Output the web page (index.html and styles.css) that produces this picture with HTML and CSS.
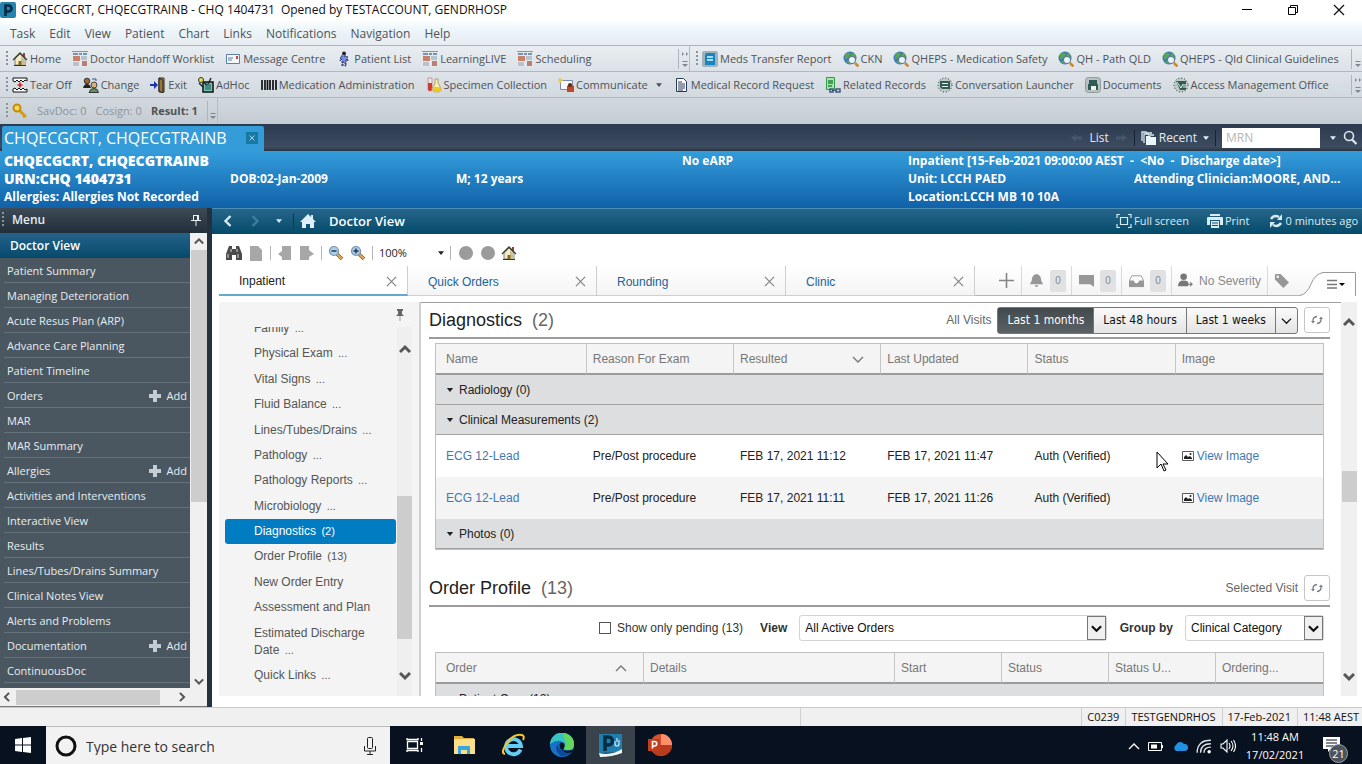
FILE: index.html
```html
<!DOCTYPE html>
<html lang="en">
<head>
<meta charset="utf-8">
<title>CHQECGCRT, CHQECGTRAINB - CHQ 1404731</title>
<link rel="stylesheet" href="styles.css">
</head>
<body>
<svg class="defs" aria-hidden="true">
  <symbol id="house" viewBox="0 0 16 16"><path d="M11 2h2v4h-2z" fill="#9c3b2e"/><path d="M3 8l5-5 5 5v6H3z" fill="#f3ebc6" stroke="#666" stroke-width=".8"/><path d="M9 5l4 4v5H9z" fill="#c9c19c"/><path d="M1 9l7-7 7 7" fill="none" stroke="#3d3d30" stroke-width="1.300"/><path d="M6.500 10h3v4h-3z" fill="#8b6a20"/><path d="M2 14.500h12" stroke="#333"/></symbol>
  <symbol id="sheet" viewBox="0 0 16 16"><path d="M0 0h16v16H0z" fill="#e2eaf0"/><path d="M0 .5h16" stroke="#6f9cc4"/><path d="M1 3h5M7 3h3M11 3h4" stroke="#51779b" stroke-width="1.400"/><path d="M1 5h7v5H1z" fill="#c97f68"/><path d="M9 6h6M9 8h6M1 12h6M1 14h6" stroke="#8d99a3"/><path d="M10 10h5v5h-5z" fill="#bd7d70"/></symbol>
  <symbol id="globe" viewBox="0 0 16 16"><circle cx="7" cy="7" r="6.500" fill="#3b78bd"/><path d="M2 3q4-3 6 0l-2 3-4 3zM10 1l3 4-3 3-2-3zM3 11l3-3 2 4-2 1z" fill="#5aa552"/><circle cx="9" cy="9" r="3.600" fill="#e8f4f7" stroke="#5d7486"/><path d="M12 12l3.500 3.500" stroke="#c98a2c" stroke-width="2.600"/></symbol>
  <symbol id="x" viewBox="0 0 12 12"><path d="M1 1l10 10M11 1L1 11" fill="none" stroke="currentColor" stroke-width="1.300"/></symbol>
  <symbol id="down" viewBox="0 0 12 12"><path d="M1 4l5 5 5-5" fill="none" stroke="currentColor" stroke-width="var(--w,2.4)"/></symbol>
  <symbol id="up" viewBox="0 0 12 12"><path d="M1 9l5-5 5 5" fill="none" stroke="currentColor" stroke-width="var(--w,2.4)"/></symbol>
  <symbol id="left" viewBox="0 0 12 12"><path d="M8.500 1l-5 5 5 5" fill="none" stroke="currentColor" stroke-width="var(--w,2.4)"/></symbol>
  <symbol id="right" viewBox="0 0 12 12"><path d="M3.500 1l5 5-5 5" fill="none" stroke="currentColor" stroke-width="var(--w,2.4)"/></symbol>
  <symbol id="caret" viewBox="0 0 8 5"><path d="M0 0h8L4 5z" fill="currentColor"/></symbol>
  <symbol id="plus" viewBox="0 0 12 12"><path d="M4 0h4v4h4v4H8v4H4V8H0V4h4z" fill="#c3cbd3"/></symbol>
  <symbol id="more" viewBox="0 0 8 18"><path d="M1 2l2 2-2 2zM5 2l2 2-2 2z" fill="#7d8990"/><path d="M1.500 11.500h5" stroke="#7d8990"/><path d="M1 14h6l-3 3z" fill="#7d8990"/></symbol>
  <symbol id="more2" viewBox="0 0 8 18"><path d="M1.500 11.500h5" stroke="#7d8990"/><path d="M1 14h6l-3 3z" fill="#7d8990"/></symbol>
  <symbol id="sync" viewBox="0 0 12 12"><path d="M2 7.500Q1.500 3 6 2.500M10 4.500Q10.500 9 6 9.500" fill="none" stroke="#7b7f82" stroke-width="1.300"/><path d="M0 7h4L2 9.500zM8 5h4L10 2.500z" fill="#7b7f82"/></symbol>
  <symbol id="photo" viewBox="0 0 12 10"><path d="M.5 .5h11v9H.5z" fill="#fff" stroke="#5c5c5c"/><path d="M2 8V6l2-2 2 2 2-1 2 2v1z" fill="#222"/><circle cx="8.500" cy="3" r="1" fill="#222"/></symbol>
  <symbol id="lens" viewBox="0 0 16 16"><path d="M9 9l5 5" stroke="#8a6130" stroke-width="3.600"/><path d="M9 9l5 5" stroke="#e0a95c" stroke-width="2"/><circle cx="6" cy="6" r="4.500" fill="#a9cdeb" stroke="#7793ac" stroke-width="1.200"/></symbol>
</svg>

<header class="titlebar">
  <svg class="app" viewBox="0 0 16 16"><rect width="16" height="16" rx="2" fill="#2583b0"/><path d="M5.500 14V3.500h3a3 3 0 010 6H6" fill="none" stroke="#062c45" stroke-width="2.600"/></svg>
  <span>CHQECGCRT, CHQECGTRAINB - CHQ 1404731</span><span class="opened">Opened by TESTACCOUNT, GENDRHOSP</span>
  <div class="winbtns">
    <button aria-label="Minimise"><svg viewBox="0 0 12 12"><path d="M1 5.500h10" stroke="#000"/></svg></button>
    <button aria-label="Restore"><svg viewBox="0 0 12 12"><path d="M1.500 3.500h7v7h-7zM3.500 3V1.500h7v7H9" fill="none" stroke="#000"/></svg></button>
    <button aria-label="Close"><svg><use href="#x"/></svg></button>
  </div>
</header>

<nav class="menubar">
  <button>Task</button><button>Edit</button><button>View</button><button>Patient</button><button>Chart</button><button>Links</button><button>Notifications</button><button>Navigation</button><button>Help</button>
</nav>

<div class="toolbar">
  <div class="tools half">
    <i class="grip"></i>
    <button><svg><use href="#house"/></svg>Home</button>
    <button><svg><use href="#sheet"/></svg>Doctor Handoff Worklist</button>
    <button><svg viewBox="0 0 16 16"><path d="M1.500 3.500h13v9h-13z" fill="#f6f9ff" stroke="#5b7fae"/><path d="M3 7h5M3 9h4" stroke="#5b7fae"/><path d="M11 5h2v3h-2z" fill="#c44d35"/></svg>Message Centre</button>
    <button><svg viewBox="0 0 16 16"><circle cx="8" cy="2.500" r="2" fill="#222"/><path d="M5 5h6l1 5-2-2v7H9v-4H7v4H6V8l-2 2z" fill="#7c93e3" stroke="#242e6b" stroke-dasharray="2 1"/></svg>Patient List</button>
    <button><svg><use href="#sheet"/></svg>LearningLIVE</button>
    <button><svg><use href="#sheet"/></svg>Scheduling</button>
    <i class="end"></i><svg class="more"><use href="#more"/></svg>
  </div>
  <div class="tools">
    <i class="grip"></i>
    <button><svg viewBox="0 0 16 16"><rect width="16" height="16" rx="2" fill="#9fb2bd"/><path d="M4 2h9v12H3V4z" fill="#1784c0"/><path d="M5 6h6M5 9h6" stroke="#e2f4ff" stroke-width="1.500"/></svg>Meds Transfer Report</button>
    <button><svg><use href="#globe"/></svg>CKN</button>
    <button><svg><use href="#globe"/></svg>QHEPS - Medication Safety</button>
    <button><svg><use href="#globe"/></svg>QH - Path QLD</button>
    <button><svg><use href="#globe"/></svg>QHEPS - Qld Clinical Guidelines</button>
    <i class="end"></i><svg class="more"><use href="#more2"/></svg>
  </div>
</div>

<div class="toolbar">
  <div class="tools">
    <i class="grip"></i>
    <button><svg viewBox="0 0 16 16"><path d="M1 1h14v3l-2-1-2 2-2-2-2 2-2-2-2 2-2-1zM1 15h14v-3l-2 1-2-2-2 2-2-2-2 2-2-2-2 1z" fill="#fff" stroke="#111"/><path d="M8 5.500v5M5.500 8h5" stroke="#d42020" stroke-width="1.600"/></svg>Tear Off</button>
    <button><svg viewBox="0 0 16 16"><circle cx="4" cy="4" r="2.800" fill="#a06935" stroke="#333"/><path d="M0 11q1-4 4-4t4 4z" fill="#222"/><circle cx="11" cy="8" r="3" fill="#dbb17c" stroke="#444"/><path d="M6 15.500q1-4 5-4t4.500 4z" fill="#5e9858" stroke="#333"/><path d="M9 2h4v2" fill="none" stroke="#2b50a8"/></svg>Change</button>
    <button><svg viewBox="0 0 16 16"><path d="M9 1h5v14H9z" fill="#e1c96e" stroke="#222"/><path d="M9 1l4 2v13l-4-2z" fill="#987734" stroke="#222"/><path d="M0 8h5" stroke="#1c32b4" stroke-width="2"/><path d="M4 4l4 4-4 4z" fill="#1c32b4"/></svg>Exit</button>
    <button><svg viewBox="0 0 16 16"><path d="M5 5h10v10H5z" fill="#76c7ba" stroke="#111" stroke-width="1.500"/><path d="M7 8h6M7 10h6M7 12h6" stroke="#164b4b"/><circle cx="3" cy="3" r="2.500" fill="#e6e051" stroke="#333"/><path d="M5 5l4 3M13 1l-3 6M1 6l4 4" stroke="#222" stroke-width="1.400"/></svg>AdHoc</button>
    <button><svg viewBox="0 0 16 16"><path d="M1 3v10M4 3v10M6.500 3v10M9 3v10M12 3v10M15 3v10" stroke="#111" stroke-width="1.700"/></svg>Medication Administration</button>
    <button><svg viewBox="0 0 16 16"><path d="M2 1h4v11a2 2 0 01-4 0z" fill="#f6e5e5" stroke="#b99"/><path d="M2 6h4v6a2 2 0 01-4 0z" fill="#d13a2d"/><path d="M9 2h3v4l3 5q1 4-4 4t-5-4l3-4z" fill="#f7efb8" stroke="#b9a05a"/><path d="M7 10h8q1 5-4 5t-4-5z" fill="#efc92a"/></svg>Specimen Collection</button>
    <button><svg viewBox="0 0 16 16"><path d="M2.500 3.500h12v9h-12z" fill="#f7f9fc" stroke="#7a8cab"/><path d="M0 3h5M2 1v5" stroke="#e7cb4d" stroke-width="1.500"/><path d="M9 15V9l3-2 4 2v6z" fill="#bd4a24"/><circle cx="12" cy="8" r="2" fill="#5a2b16"/></svg>Communicate<svg class="dd"><use href="#caret"/></svg></button>
    <button><svg viewBox="0 0 16 16"><path d="M3.500 1.500h7l3 3v10h-10z" fill="#fff" stroke="#263b5c"/><path d="M5 5h4M5 7h7M5 9h7M5 11h7M5 13h5" stroke="#263b5c"/></svg>Medical Record Request</button>
    <button><svg viewBox="0 0 16 16"><path d="M1.500 .5h8v12h-8z" fill="#a8e5ae" stroke="#2d9c47"/><path d="M3 4h5M3 6h5M3 9h4" stroke="#278442" stroke-width="1.300"/><path d="M5 12h3v3H5zM11 12h4v3h-4z" fill="none" stroke="#445780" stroke-width="1.500"/><path d="M7 13.500h5" stroke="#445780"/></svg>Related Records</button>
    <button><svg viewBox="0 0 16 16"><circle cx="8" cy="8" r="7" fill="#bfcbc8" stroke="#222" stroke-dasharray="1 2"/><path d="M3 4h10v8H5l-2-2z" fill="#315c54"/><path d="M5 6.500h6M5 9.500h6" stroke="#e8f2ed"/></svg>Conversation Launcher</button>
    <button><svg viewBox="0 0 16 16"><rect x=".5" y=".5" width="15" height="15" rx="3" fill="#b8c1c1" stroke="#929b9c"/><path d="M4 3h8v4h1v6H3V7h1z" fill="#315c54"/><path d="M6 9h5v4H6z" fill="#e9f4ef"/></svg>Documents</button>
    <button><svg viewBox="0 0 16 16"><circle cx="8" cy="8" r="7" fill="#bfcbc8" stroke="#222" stroke-dasharray="1 2"/><path d="M3 4h10v9H7z" fill="#315c54"/><path d="M4 5l4 6 2-4M10 8h4M10 10h3" fill="none" stroke="#e8f2ed"/></svg>Access Management Office</button>
    <i class="end"></i><svg class="more"><use href="#more"/></svg>
  </div>
</div>

<div class="toolbar last">
  <div class="tools short">
    <i class="grip"></i>
    <svg class="key" viewBox="0 0 16 16"><path d="M7 7l6 6M11 14l3-2" stroke="#d69b16" stroke-width="3"/><circle cx="5" cy="5" r="3.500" fill="#f7d94d" stroke="#c48a13" stroke-width="2"/></svg>
    <span class="dim">SavDoc: 0</span><span class="dim">Cosign: 0</span><b>Result: 1</b>
    <i class="end"></i><svg class="more"><use href="#more2"/></svg>
  </div>
</div>

<div class="patienttabs">
  <div class="ptab"><span>CHQECGCRT, CHQECGTRAINB</span><button aria-label="Close chart"><svg><use href="#x"/></svg></button></div>
  <div class="finder">
    <svg class="arrow" viewBox="0 0 14 10"><path d="M6 0v3h8v4H6v3L0 5z" fill="#48566a"/></svg><button>List</button><svg class="arrow" viewBox="0 0 14 10"><path d="M8 0v3H0v4h8v3l6-5z" fill="#48566a"/></svg>
    <button class="recent"><svg viewBox="0 0 16 14"><path d="M1 10V1h4l1 1h5M3 12V3h4l1 1h5" fill="none" stroke="#dce8f0" stroke-width="1.300"/><path d="M5 5h4l1 1h5v8H5z" fill="#eaf4fa"/></svg>Recent<svg class="dd"><use href="#caret"/></svg></button>
    <input aria-label="MRN" placeholder="MRN">
    <svg class="dd"><use href="#caret"/></svg>
    <button aria-label="Search"><svg viewBox="0 0 16 16"><circle cx="7" cy="6" r="4.500" fill="none" stroke="#dce8f0" stroke-width="1.600"/><path d="M10 9.500l4.500 4.500" stroke="#dce8f0" stroke-width="2.200"/></svg></button>
  </div>
</div>

<section class="banner">
  <strong class="big">CHQECGCRT, CHQECGTRAINB</strong><span class="c4">No eARP</span><span class="c5 wide">Inpatient [15-Feb-2021 09:00:00 AEST&nbsp; -&nbsp; &lt;No&nbsp; -&nbsp; Discharge date&gt;]</span>
  <strong class="big">URN:CHQ 1404731</strong><span>DOB:02-Jan-2009</span><span>M; 12 years</span><span class="c5">Unit: LCCH PAED</span><span>Attending Clinician:MOORE, AND...</span>
  <span>Allergies: Allergies Not Recorded</span><span class="c5">Location:LCCH MB 10 10A</span>
</section>

<main class="work">
  <aside class="menu">
    <div class="menuhead"><i class="grip"></i><span>Menu</span><svg viewBox="0 0 10 12"><path d="M2.500 1v5M7.500 1v5M2 1.500h5M0 6.500h10M5 7v5M6.500 1v5" stroke="#e9eff2" fill="none"/></svg></div>
    <div class="menubody">
      <ul>
        <li class="on"><a href="#">Doctor View</a></li>
        <li><a href="#">Patient Summary</a></li>
        <li><a href="#">Managing Deterioration</a></li>
        <li><a href="#">Acute Resus Plan (ARP)</a></li>
        <li><a href="#">Advance Care Planning</a></li>
        <li><a href="#">Patient Timeline</a></li>
        <li><a href="#">Orders</a><button><svg><use href="#plus"/></svg>Add</button></li>
        <li><a href="#">MAR</a></li>
        <li><a href="#">MAR Summary</a></li>
        <li><a href="#">Allergies</a><button><svg><use href="#plus"/></svg>Add</button></li>
        <li><a href="#">Activities and Interventions</a></li>
        <li><a href="#">Interactive View</a></li>
        <li><a href="#">Results</a></li>
        <li><a href="#">Lines/Tubes/Drains Summary</a></li>
        <li><a href="#">Clinical Notes View</a></li>
        <li><a href="#">Alerts and Problems</a></li>
        <li><a href="#">Documentation</a><button><svg><use href="#plus"/></svg>Add</button></li>
        <li><a href="#">ContinuousDoc</a></li>
        <li></li>
      </ul>
      <div class="vscroll"><svg><use href="#up"/></svg><i class="thumb"></i><svg><use href="#down"/></svg></div>
    </div>
    <div class="hscroll"><svg><use href="#left"/></svg><i class="thumb"></i><svg><use href="#right"/></svg></div>
  </aside>

  <section class="view">
    <div class="navbar">
      <button aria-label="Back"><svg class="s12"><use href="#left"/></svg></button>
      <button class="faint" aria-label="Forward"><svg class="s12"><use href="#right"/></svg></button>
      <svg class="dd"><use href="#caret"/></svg>
      <button class="home" aria-label="Home"><svg viewBox="0 0 16 16"><path d="M0 9l8-8 3 3V2h2v4l3 3h-2v6h-4v-4H6v4H2V9z" fill="#dff0f8"/></svg></button>
      <h1>Doctor View</h1>
      <div class="navright">
        <button><svg viewBox="0 0 16 16"><path d="M1 5V1.500h3M12 1.500h3V5M15 11v3.500h-3M4 14.500H1V11M4.500 4.500h7v7h-7z" fill="none" stroke="#d9ebf3" stroke-width="1.200"/></svg>Full screen</button>
        <button><svg viewBox="0 0 16 16"><path d="M3 1h10v2H3zM1 4h14q1 0 1 1v7h-3V7H3v5H0V5q0-1 1-1zM4 8h8v7H4z" fill="#d9ebf3"/><path d="M5 10h6M5 12.500h6" stroke="#0e5576"/></svg>Print</button>
        <button><svg viewBox="0 0 16 16"><path d="M3 6Q6 1.500 11 4M13 10q-3 4.500-8 2" fill="none" stroke="#d9ebf3" stroke-width="2.400"/><path d="M9 7l5 0 0-6zM7 9H2v6z" fill="#d9ebf3"/></svg>0 minutes ago</button>
      </div>
    </div>

    <div class="iconbar">
      <svg viewBox="0 0 16 14"><path d="M3 0h3v3h4V0h3l3 8v6h-6V9H6v5H0V8z" fill="#4a4a4a"/><path d="M2 8v4M5 3v3M11 3v3M12 8v4" stroke="#d8d8d8"/></svg>
      <svg viewBox="0 0 16 16"><path d="M2 1h8l4 4v11H2z" fill="#a7a7a7"/></svg><i></i>
      <svg viewBox="0 0 16 16"><path d="M5 1h9v14H5v-3L1 9l4-3z" fill="#a7a7a7"/></svg>
      <svg viewBox="0 0 16 16"><path d="M1 1h9v4l5 4-5 3v3H1z" fill="#a7a7a7"/></svg><i></i>
      <svg viewBox="0 0 16 16"><use href="#lens"/><path d="M3.500 6h5" stroke="#234" stroke-width="1.400"/></svg>
      <svg viewBox="0 0 16 16"><use href="#lens"/><path d="M3.500 6h5M6 3.500v5" stroke="#234" stroke-width="1.400"/></svg><i></i>
      <span class="zoom">100%<svg class="dd"><use href="#caret"/></svg></span><i></i>
      <b></b><b></b>
      <svg><use href="#house"/></svg>
    </div>

    <div class="tabs">
      <div class="tab on"><a href="#">Inpatient</a><button aria-label="Close Inpatient"><svg><use href="#x"/></svg></button></div>
      <div class="tab"><a href="#">Quick Orders</a><button aria-label="Close Quick Orders"><svg><use href="#x"/></svg></button></div>
      <div class="tab"><a href="#">Rounding</a><button aria-label="Close Rounding"><svg><use href="#x"/></svg></button></div>
      <div class="tab"><a href="#">Clinic</a><button aria-label="Close Clinic"><svg><use href="#x"/></svg></button></div>
      <div class="acts">
        <button class="add" aria-label="Add tab"><svg viewBox="0 0 16 16"><path d="M8 0v16M0 8h16" stroke="#858585" stroke-width="1.700"/></svg></button>
        <button><svg viewBox="0 0 16 16"><path d="M8 1q5 1 5 7l2 4H1l2-4q0-6 5-7zM6 13h4q-2 4-4 0z" fill="#979797"/></svg><em>0</em></button>
        <button><svg viewBox="0 0 16 16"><path d="M0 2h16v13l-4-3H0z" fill="#979797"/></svg><em>0</em></button>
        <button><svg viewBox="0 0 16 16"><path d="M3 3h10l2.500 5v6.500H.5V8z" fill="#fff" stroke="#979797"/><path d="M0 8h5q1 3 3 3t3-3h5v7H0z" fill="#979797"/></svg><em>0</em></button>
        <button class="sev"><svg viewBox="0 0 16 16"><circle cx="6" cy="4" r="3.500" fill="#777"/><path d="M0 14q0-6 6-6t5 4v2z" fill="#777"/><path d="M10 12h5M13 10l2 2-2 2" fill="none" stroke="#777" stroke-width="1.200"/></svg>No Severity</button>
        <button class="tag" aria-label="Tag"><svg viewBox="0 0 16 16"><path d="M1 2q0-1 1-1h5l9 9-6 6-9-9z" fill="#979797"/><circle cx="4" cy="4" r="1.300" fill="#fff"/></svg></button>
        <button class="opts" aria-label="Options"><svg class="curve" viewBox="0 0 60 30" preserveAspectRatio="none"><path d="M0 29.500Q7 28 11 18T23 6.500h32.500V30H0z" fill="#fff"/><path d="M0 29.500Q7 28 11 18T23 6.500h32.500V30" fill="none" stroke="#999"/></svg><svg class="lines" viewBox="0 0 18 10"><path d="M0 1.500h10M0 5.500h10M0 9h10" stroke="#777" stroke-width="1.300"/><path d="M12 4h6l-3 3z" fill="#000"/></svg></button>
      </div>
    </div>

    <div class="page">
      <nav class="side">
        <svg class="pin" viewBox="0 0 8 14"><path d="M1 1h6v2H6v3l2 2H0l2-2V3H1z" fill="#666"/><path d="M4 8v5" stroke="#999"/></svg>
        <div class="clip">
          <ul>
            <li><a href="#">Family <small>...</small></a></li>
            <li><a href="#">Physical Exam <small>...</small></a></li>
            <li><a href="#">Vital Signs <small>...</small></a></li>
            <li><a href="#">Fluid Balance <small>...</small></a></li>
            <li><a href="#">Lines/Tubes/Drains <small>...</small></a></li>
            <li><a href="#">Pathology <small>...</small></a></li>
            <li><a href="#">Pathology Reports <small>...</small></a></li>
            <li><a href="#">Microbiology <small>...</small></a></li>
            <li class="on"><a href="#">Diagnostics <small>(2)</small></a></li>
            <li><a href="#">Order Profile <small>(13)</small></a></li>
            <li><a href="#">New Order Entry</a></li>
            <li><a href="#">Assessment and Plan</a></li>
            <li><a href="#">Estimated Discharge Date <small>...</small></a></li>
            <li><a href="#">Quick Links <small>...</small></a></li>
          </ul>
          <div class="sidescroll"><svg><use href="#up"/></svg><i class="thumb"></i><svg><use href="#down"/></svg></div>
        </div>
      </nav>

      <div class="content">
        <section class="block">
          <div class="head">
            <h2>Diagnostics <span>(2)</span></h2>
            <span class="scope">All Visits</span>
            <div class="range"><button class="on">Last 1 months</button><button>Last 48 hours</button><button>Last 1 weeks</button><button class="arr" aria-label="More ranges"><svg><use href="#down"/></svg></button></div>
            <button class="refresh" aria-label="Refresh"><svg><use href="#sync"/></svg></button>
          </div>
          <table>
            <colgroup><col class="w17"><col><col><col><col><col></colgroup>
            <thead><tr><th>Name</th><th>Reason For Exam</th><th>Resulted<svg><use href="#down"/></svg></th><th>Last Updated</th><th>Status</th><th>Image</th></tr></thead>
            <tbody>
              <tr class="group"><td colspan="6"><svg><use href="#caret"/></svg>Radiology (0)</td></tr>
              <tr class="group"><td colspan="6"><svg><use href="#caret"/></svg>Clinical Measurements (2)</td></tr>
              <tr><td><a href="#">ECG 12-Lead</a></td><td>Pre/Post procedure</td><td>FEB 17, 2021 11:12</td><td>FEB 17, 2021 11:47</td><td>Auth (Verified)</td><td><a href="#"><svg><use href="#photo"/></svg>View Image</a></td></tr>
              <tr class="alt"><td><a href="#">ECG 12-Lead</a></td><td>Pre/Post procedure</td><td>FEB 17, 2021 11:11</td><td>FEB 17, 2021 11:26</td><td>Auth (Verified)</td><td><a href="#"><svg><use href="#photo"/></svg>View Image</a></td></tr>
              <tr class="group"><td colspan="6"><svg><use href="#caret"/></svg>Photos (0)</td></tr>
            </tbody>
          </table>
        </section>

        <section class="block orders">
          <div class="head">
            <h2>Order Profile <span>(13)</span></h2>
            <span class="scope">Selected Visit</span>
            <button class="refresh" aria-label="Refresh orders"><svg><use href="#sync"/></svg></button>
          </div>
          <div class="filters">
            <label class="check"><input type="checkbox">Show only pending (13)</label>
            <label for="view">View</label>
            <span class="pick wide"><select id="view"><option>All Active Orders</option></select><svg><use href="#down"/></svg></span>
            <label for="by">Group by</label>
            <span class="pick"><select id="by"><option>Clinical Category</option></select><svg><use href="#down"/></svg></span>
          </div>
          <table>
            <colgroup><col class="order"><col><col class="n"><col class="n"><col class="n"><col class="n"></colgroup>
            <thead><tr><th>Order<svg><use href="#up"/></svg></th><th>Details</th><th>Start</th><th>Status</th><th>Status U...</th><th>Ordering...</th></tr></thead>
            <tbody><tr class="group"><td colspan="6"><svg><use href="#caret"/></svg>Patient Care (12)</td></tr></tbody>
          </table>
        </section>
        <svg class="pointer" viewBox="0 0 13 21"><path d="M1 1v16l4-4 3 7 2-1-3-6h5z" fill="#fff" stroke="#000"/></svg>
      </div>
      <div class="mainscroll"><svg><use href="#up"/></svg><i class="thumb"></i><svg><use href="#down"/></svg></div>
    </div>
  </section>
</main>

<footer class="status"><i class="msg"></i><i></i><span>C0239</span><span>TESTGENDRHOS</span><span>17-Feb-2021</span><span>11:48 AEST</span></footer>

<div class="taskbar">
  <button class="start" aria-label="Start"><svg viewBox="0 0 16 16"><path d="M0 2l7-1v6.500H0zM8 1l8-1v7.500H8zM0 8.500h7V15l-7-1zM8 8.500h8V16l-8-1z" fill="#fff"/></svg></button>
  <div class="search"><svg viewBox="0 0 22 22"><circle cx="11" cy="11" r="9" fill="none" stroke="#111" stroke-width="3"/></svg><input aria-label="Search" placeholder="Type here to search"><svg class="mic" viewBox="0 0 12 18"><rect x="3.500" y=".5" width="5" height="11" rx="1" fill="none" stroke="#222"/><path d="M.5 9v5h11V9M6 14v3M3 17.500h6" fill="none" stroke="#222"/></svg></div>
  <button aria-label="Task view"><svg class="tv" viewBox="0 0 18 16"><path d="M1.500 4.500h10v7h-10zM1 1v1.500h11V1M1 15v-1.500h11V15M15.500 1v3M15.500 11v4" fill="none" stroke="#fff" stroke-width="1.300"/><path d="M14 5h3v3h-3z" fill="#fff"/></svg></button>
  <button aria-label="File Explorer"><svg viewBox="0 0 24 24"><path d="M2 3h8l2 2h10v4H2z" fill="#e4ae3c"/><path d="M2 6h21v15H2z" fill="#fbe08c"/><path d="M6 21v-7q0-1 1-1h10q1 0 1 1v7h-3v-4H9v4z" fill="#3aa5dc"/></svg></button>
  <button aria-label="Internet Explorer"><svg viewBox="0 0 24 24"><path d="M19.500 16.500a7.500 7.500 0 11.500-3.500H7" fill="none" stroke="#63cdf5" stroke-width="3.800"/><path d="M4 21Q-1 20 6 10T21 2q3 1 1 5" fill="none" stroke="#f2c535" stroke-width="2"/></svg></button>
  <button aria-label="Edge"><svg viewBox="0 0 24 24"><circle cx="12" cy="12" r="12" fill="#1673c8"/><path d="M0 11A12 12 0 0124 12q0 5-6 5-4 0-4-2 2-2 0-5-6-5-14 1z" fill="#35c4c3"/><path d="M13 0q11 2 11 11 0 6-6 6-4 0-4-2 4-4 1-8z" fill="#63d65b"/><path d="M8 10q-1 9 14 8-4 6-11 5-8-5-3-13z" fill="#0b4b9a"/><path d="M14 10q-6-2-4 5 3 4 12 2l2 1q-3 2-7 2-6-2-3-5 1-2 0-5z" fill="#0a1523"/></svg></button>
  <button class="cur" aria-label="PowerChart"><svg viewBox="0 0 24 24"><path d="M0 1h23v18L0 20z" fill="#1c7fad"/><path d="M0 20q12 3 23-4v4q-10 4-22 4z" fill="#eef6fa"/><path d="M6 18V4h3.500a3.500 3.500 0 010 8H7" fill="none" stroke="#062b45" stroke-width="3.500"/><path d="M16 8v3a2 2 0 004 0V7M18 5v4" fill="none" stroke="#cdeaf7" stroke-width="1.200"/></svg></button>
  <button aria-label="PowerPoint"><svg viewBox="0 0 24 24"><circle cx="13" cy="12" r="11" fill="#d35230"/><path d="M13 1a11 11 0 0111 11H13z" fill="#ff8f6b"/><path d="M2 12h22a11 11 0 01-20 6z" fill="#b93b1e"/><path d="M0 6h12v12H0z" fill="#c43e1c"/><path d="M4.500 15.500v-7h2a2 2 0 010 4.500H5" fill="none" stroke="#fff" stroke-width="1.600"/></svg></button>
  <div class="tray">
    <svg class="s12 thin"><use href="#up"/></svg>
    <svg viewBox="0 0 16 12"><path d="M.5 2.500h13v8H.5zM14.500 5v3" fill="none" stroke="#fff"/><path d="M3 4.500h6v4H3z" fill="#fff"/></svg>
    <svg viewBox="0 0 16 12"><path d="M4 11a3.500 3.500 0 010-6 4.500 4.500 0 018-1 3.500 3.500 0 011 7z" fill="#2191e2"/></svg>
    <svg viewBox="0 0 14 14"><path d="M1 13Q1 2 13 2M4 13q0-8 9-8M7 13q0-5 6-5" fill="none" stroke="#dfe5ea" stroke-width="1.200"/><circle cx="11.500" cy="12" r="1.500" fill="#fff"/></svg>
    <svg viewBox="0 0 16 14"><path d="M1 5h2l4-4v12L3 9H1zM9 4q2 3 0 6M11 2q4 5 0 10M13.500 1q4 6 0 12" fill="none" stroke="#fff" stroke-width="1.100"/></svg>
  </div>
  <div class="clock"><span>11:48 AM</span><span>17/02/2021</span></div>
  <button class="notes" aria-label="Notifications"><svg viewBox="0 0 18 16"><path d="M0 0h17v12H8l-3 3v-3H0z" fill="#fff"/><path d="M3 3h11M3 6h11M3 9h11" stroke="#08121f"/></svg><span>21</span></button>
</div>
</body>
</html>
```
FILE: styles.css
```css
* { box-sizing: border-box; }
body { margin: 0; height: 100vh; display: flex; flex-direction: column; overflow: hidden; background: #fff; color: #222; font: 12px/16px "Open Sans", sans-serif; white-space: nowrap; }
button, input, select { font: inherit; color: inherit; margin: 0; padding: 0; border: 0; background: none; }
button { display: inline-flex; align-items: center; white-space: nowrap; }
a { color: inherit; text-decoration: none; }
svg { display: block; flex: none; width: 16px; height: 16px; }
.defs { position: absolute; width: 0; height: 0; }
ul { list-style: none; margin: 0; padding: 0; }
h1, h2 { margin: 0; }
svg.dd { width: 6px; height: 4px; }
svg.s12 { width: 12px; height: 12px; }

.titlebar { flex: none; display: flex; align-items: center; height: 20px; color: #111; }
.titlebar .app { margin-right: 5px; }
.opened { margin-left: 6px; }
.winbtns { margin-left: auto; display: flex; gap: 34px; padding-right: 17px; }
.winbtns svg { width: 12px; height: 12px; }
.menubar { flex: none; display: flex; align-items: center; gap: 14px; height: 26px; padding: 2px 10px 0; color: #4d5358; background: linear-gradient(#fff, #eff7fb 30%, #e6ecf1); border-bottom: 1px solid #a9b4bf; }

.toolbar { flex: none; display: flex; height: 26px; font-size: 11px; color: #4d5358; background: linear-gradient(#e9eef2, #dbe1e6); border-bottom: 1px solid #aeb8c2; }
.toolbar + .toolbar { background: linear-gradient(#dde3e8, #d2d9df); }
.toolbar.last { background: linear-gradient(#d2d8de, #c4ccd3); border-bottom: 0; }
.tools { flex: 1; display: flex; align-items: center; gap: 11px; padding-left: 6px; min-width: 0; }
.tools.half { flex: 0 0 690px; border-right: 1px solid #b4bdc6; }
.tools.short { flex: none; gap: 9px; border-right: 1px solid #b4bdc6; }
.tools button, .tools .key { flex: none; gap: 2px; }
.grip { flex: none; width: 2px; height: 16px; margin-right: -7px; background: repeating-linear-gradient(#88939b 0 2px, transparent 2px 4px); }
.end { width: 1px; height: 20px; margin-left: auto; background: #abb5be; }
svg.more { width: 8px; height: 18px; margin-left: -9px; }
.short .grip { margin-right: -5px; }
.short svg.more { margin-left: -8px; }
.tools button svg.dd { margin-left: 6px; }
.dim { color: #8c959c; }

.patienttabs { flex: none; display: flex; justify-content: space-between; height: 27px; background: linear-gradient(#2c3a4e, #3d4c61 85%, #26323f); color: #e3ebf1; }
.ptab { display: flex; align-items: center; justify-content: space-between; width: 262px; margin: 2px 0 0 2px; padding: 0 6px 2px 2px; color: #fff; font-size: 16px; background: #349cd8; border-radius: 2px 2px 0 0; }
.ptab button { justify-content: center; width: 12px; height: 12px; background: #1879a5; }
.ptab button svg { width: 6px; height: 6px; }
.finder { display: flex; align-items: center; gap: 6px; padding-right: 4px; }
.finder .arrow { width: 13px; height: 8px; }
.recent { gap: 2px; padding: 0 6px 0 6px; border: solid #172331; border-width: 0 1px; }
.recent svg.dd { margin-left: 4px; }
.finder input { width: 98px; height: 20px; padding: 0 4px; background: #fff; color: #222; }
.finder input::placeholder { color: #b5b5b5; opacity: 1; }
.finder input + .dd { margin-left: 4px; }

.banner { flex: none; display: grid; grid-template-columns: repeat(6, minmax(0, 1fr)); grid-auto-rows: 18px; align-items: center; height: 57px; padding: 1px 2px 0 4px; color: #fff; font-weight: 700; background: linear-gradient(#349ddb, #1061a8); }
.big { font-size: 14px; }
.c4 { grid-column: 4; }
.c5 { grid-column: 5; }
.c5.wide { grid-column: 5 / 7; }

.work { flex: 1; display: flex; min-height: 0; }
.menu { flex: none; display: flex; flex-direction: column; width: 212px; border-right: 5px solid #253140; color: #e8edf0; background: #f0f0f0; }
.menuhead { flex: none; display: flex; align-items: center; height: 25px; padding: 0 6px 2px 2px; font-weight: 600; background: linear-gradient(#3e4c58, #222e3a); }
.menuhead .grip { margin: 0; }
.menuhead span { flex: 1; margin-left: 8px; }
.menuhead svg { width: 10px; height: 12px; }
.menubody { flex: 1; display: flex; min-height: 0; }
.menubody ul { flex: 1; overflow: hidden; background: #4a5761; }
.menubody li { display: flex; align-items: center; justify-content: space-between; height: 25px; padding: 0 3px 0 7px; font-size: 11px; box-shadow: inset 4px 0 #4a5761, inset 0 -1px #64727c; }
.menubody li.on { padding-left: 10px; color: #fff; font-size: 12px; font-weight: 600; background: linear-gradient(#24628a, #074a6b); box-shadow: none; }
.menubody li button { gap: 6px; }
.menubody li svg { width: 12px; height: 12px; }
.vscroll, .hscroll { display: flex; align-items: center; color: #555; background: #f0f0f0; }
.vscroll { flex: none; flex-direction: column; width: 17px; padding: 3px 0 2px; }
.vscroll svg, .hscroll svg { width: 10px; height: 10px; }
.thumb { background: #cdcdcd; }
.vscroll .thumb { flex: 0 0 252px; width: 16px; margin: 4px 0 auto; }
.hscroll { flex: none; height: 19px; padding: 0 20px 0 2px; border-bottom: 1px solid #777; }
.hscroll .thumb { flex: 0 0 144px; height: 15px; margin: 0 auto 0 4px; }

.view { flex: 1; display: flex; flex-direction: column; min-width: 0; }
.navbar { flex: none; display: flex; align-items: center; height: 26px; padding: 0 4px 2px 10px; font-size: 12px; color: #dcebf2; background: linear-gradient(#27658b, #044b69); border-top: 1px solid #4b8fb5; }
.navbar .faint { margin: 0 15px 0 15px; color: #3f7d9f; }
.home { margin: 0 13px 0 11px; padding-left: 6px; border-left: 1px solid #0a3c56; }
.navbar h1 { font-size: 13px; font-weight: 600; line-height: 18px; color: #fff; }
.navright { margin-left: auto; display: flex; gap: 18px; font-size: 11px; }
.navright button { gap: 2px; }

.iconbar { flex: none; display: flex; align-items: center; gap: 6px; height: 32px; padding: 6px 0 0 14px; }
.iconbar i { width: 1px; height: 14px; background: #b5b5b5; }
.iconbar b { width: 14px; height: 14px; margin-left: 2px; border-radius: 50%; background: #9b9b9b; }
.zoom { display: flex; align-items: center; justify-content: space-between; width: 65px; font-size: 11px; }

.tabs { flex: none; display: flex; height: 30px; padding: 0 6px 0 7px; font-family: "Liberation Sans", Arial, sans-serif; }
.tab { flex: 0 0 189px; display: flex; align-items: center; justify-content: space-between; padding: 2px 10px 0 20px; color: #20639b; background: linear-gradient(#fff, #f4f4f4); border: solid #cfcfcf; border-width: 0 1px 1px 0; }
.tab.on { color: #222; background: #fff; border-bottom: 2px solid #66a9cd; }
.tab svg { width: 11px; height: 11px; color: #848484; }
.acts { flex: 1; display: flex; justify-content: flex-end; min-width: 0; background: linear-gradient(#fff, #f4f4f4); border-bottom: 1px solid #b5b5b5; }
.acts button { padding: 0 5px 0 7px; gap: 6px; border-right: 1px solid #dadada; color: #898989; }
.acts .add { padding: 0 7px; }
.acts em { width: 16px; padding: 3px 0; text-align: center; font-style: normal; font-size: 10px; line-height: 16px; background: #e0e1e2; border-radius: 2px; }
.acts svg { width: 15px; height: 15px; }
.acts .sev { padding: 0 6px; }
.acts .tag { padding: 0 11px 0 6px; border: 0; }
.acts .opts { display: grid; align-items: start; width: 60px; padding: 0; border: 0; margin: 0 -4px -1px 0; }
.opts svg { grid-area: 1 / 1; }
.opts svg.curve { width: 60px; height: 30px; }
.opts svg.lines { width: 18px; height: 10px; margin: 13px 0 0 27px; }

.page { flex: 1; display: flex; min-height: 0; margin: 6px 5px 11px 7px; font: 12px/17px "Liberation Sans", Arial, sans-serif; }
.side { flex: none; display: flex; flex-direction: column; width: 202px; background: #f4f4f4; color: #555; border-right: 2px solid #d0d0d0; border-radius: 3px 0 0 0; }
.side .pin { width: 8px; height: 14px; margin: 6px 15px 5px auto; }
.clip { flex: 1; display: flex; overflow: hidden; min-height: 0; }
.clip ul { flex: none; display: flex; flex-direction: column; justify-content: space-between; width: 178px; height: 372px; margin-top: -11px; padding: 0 1px 0 6px; }
.clip li { padding: 4px 20px 4px 29px; border-radius: 3px; white-space: normal; }
.clip li.on { color: #fff; background: #007cc3; }
.clip small { margin-left: 2px; font-size: 11px; }
.sidescroll { width: 15px; display: flex; flex-direction: column; align-items: center; padding: 16px 0 15px; background: #efefef; color: #555; }
.sidescroll svg, .mainscroll svg { width: 12px; height: 12px; --w: 3; }
.sidescroll .thumb { flex: 0 0 143px; width: 15px; margin-top: auto; margin-bottom: 30px; }

.content { flex: 1; position: relative; overflow: hidden; min-width: 0; padding: 0 11px 0 8px; border-top: 1px solid #a0a0a0; }
.head { display: flex; align-items: center; height: 36px; border-bottom: 2px solid #9b9b9b; color: #666; }
.head h2 { flex: 1; font-size: 18px; line-height: 22px; font-weight: 400; color: #222; }
.head h2 span { margin-left: 5px; color: #666; }
.range { display: flex; margin: 0 6px; height: 27px; border: 1px solid #777; border-radius: 3px; color: #111; font-family: "DejaVu Sans Condensed", "Noto Sans", sans-serif; background: linear-gradient(#fafafa, #e4e4e4); }
.range button { padding: 0 9px; border-right: 1px solid #777; }
.range .on { color: #fff; background: linear-gradient(#434a4d, #5b6265); }
.range .arr { padding: 0 5px; border: 0; }
.range svg { width: 11px; height: 11px; --w: 1.4; }
.refresh { justify-content: center; width: 26px; height: 26px; border: 1px solid #c6c6c6; border-radius: 3px; }
.refresh svg { width: 12px; height: 12px; }
.orders .refresh { margin-left: 6px; }
table { width: calc(100% - 12px); margin: 4px 6px 0 6px; table-layout: fixed; border-collapse: separate; border-spacing: 0; border: 1px solid #c0c0c0; }
.w17 { width: 17%; }
.order { width: 208px; }
.n { width: 107px; }
th, td { padding: 0 6px; text-align: left; font-weight: 400; }
th { height: 31px; padding-top: 1px; color: #777; background: #f4f4f4; border-bottom: 2px solid #9b9b9b; border-right: 1px solid #c6c6c6; }
th:last-child { border-right: 0; }
th:first-child, td:first-child { padding-left: 10px; }
th svg { float: right; width: 12px; height: 12px; margin: 2px 10px 0 0; --w: 1.4; }
td { height: 42px; color: #222; }
td a { color: #3f79b5; }
td svg { display: inline-block; width: 12px; height: 10px; margin-right: 3px; vertical-align: -1px; color: #222; }
.alt td { background: #f4f4f4; }
.group td { height: 30px; padding-top: 1px; background: #dddee0; border-bottom: 1px solid #a2a2a2; }
.group svg { width: 8px; height: 4px; margin-right: 5px; vertical-align: 2px; }
.orders { margin-top: 21px; }
.filters { display: flex; align-items: center; height: 41px; margin: 0 6px 0 170px; color: #333; }
.filters > label { padding-top: 1px; font-weight: 700; }
.filters .check { display: flex; align-items: center; margin-right: 17px; font-weight: 400; }
.check input { appearance: none; width: 12px; height: 12px; margin-right: 6px; border: 1px solid #555; background: #fff; }
.pick { flex: 0 0 139px; display: grid; align-items: center; margin-left: 12px; }
.pick.wide { flex: 1; margin-right: 13px; }
.pick select { grid-area: 1 / 1; appearance: none; height: 26px; padding: 2px 24px 0 5px; color: #111; border: 1px solid #d4d4d4; border-radius: 3px; background: #fff; }
.pick svg { grid-area: 1 / 1; justify-self: end; width: 19px; height: 24px; margin-right: 1px; padding: 0 3px; border: 1px solid #777; background: #f0f0f0; color: #111; pointer-events: none; }
.orders table { margin-top: 4px; }
.pointer { position: absolute; left: 735px; top: 148px; width: 13px; height: 21px; }
.mainscroll { flex: none; display: flex; flex-direction: column; align-items: center; width: 16px; padding: 14px 0; background: #f0f0f0; color: #555; }
.mainscroll .thumb { flex: 0 0 31px; width: 15px; margin: 143px 0 auto; }

.status { flex: none; display: flex; height: 19px; font-size: 11px; color: #111; background: #f0f0f0; border-top: 1px solid #c9c9c9; }
.status span { padding: 1px 6px 0 5px; border-left: 1px solid #d0d0d0; }
.status i { flex: 1; }
.status .msg { flex: 0 0 801px; border-right: 1px solid #d0d0d0; }
.status span:last-child { padding-right: 3px; }

.taskbar { flex: none; display: flex; align-items: stretch; height: 38px; color: #fff; background: #07111f; }
.taskbar > button { justify-content: center; width: 49px; }
.taskbar > button svg { width: 24px; height: 24px; }
.taskbar > .start { width: 46px; }
.taskbar > .start svg { width: 16px; height: 16px; }
.taskbar > button svg.tv { width: 18px; height: 16px; }
.taskbar > .cur { background: #3a424b; }
.search { flex: 0 0 344px; display: flex; align-items: center; padding: 0 14px 0 9px; background: #f2f2f2; border-top: 1px solid #bbb; }
.search svg { width: 22px; height: 22px; }
.search svg.mic { width: 12px; height: 18px; }
.search input { flex: 1; min-width: 0; padding: 2px 9px 0; font-size: 14px; color: #333; }
.search input::placeholder { color: #333; opacity: 1; }
.tray { margin-left: auto; display: flex; align-items: center; gap: 8px; padding-top: 2px; }
.thin { --w: 1.4; }
.clock { display: flex; flex-direction: column; align-items: center; justify-content: center; width: 78px; padding-top: 1px; font-size: 11px; line-height: 18px; }
.taskbar > .notes { position: relative; justify-content: flex-start; width: 48px; padding-left: 9px; }
.taskbar > .notes svg { width: 18px; height: 16px; }
.notes span { position: absolute; left: 15px; top: 18px; width: 19px; height: 19px; border-radius: 50%; background: #4b535c; border: 1px solid #9aa0a6; font-size: 11px; line-height: 17px; text-align: center; }
```
